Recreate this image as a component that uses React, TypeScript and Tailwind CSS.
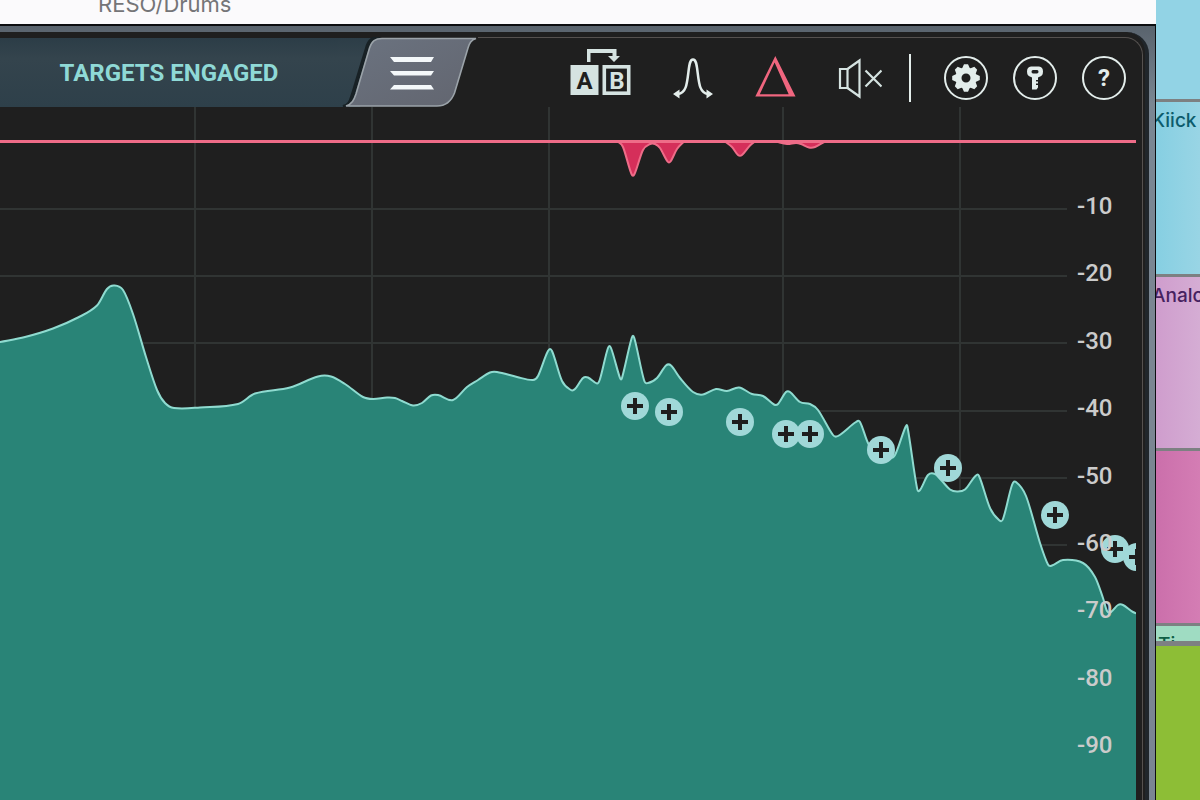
import React from "react";

type Point = [number, number];

const PLOT = { x: 0, y: 107, width: 1136, height: 693 };

const spectrum: Point[] = [
  [-10, 344], [0, 342], [25, 337], [53, 328.5], [78, 317.5], [97, 305.5], [107, 289], [114, 285.5], [123, 290],
  [133, 314], [146, 357], [157, 390], [165, 403], [174, 408], [200, 407.5], [238, 404], [255, 393.5], [290, 387.5], [318, 376.5],
  [331, 376.5], [345, 384], [363, 397], [373, 399], [387, 397.5], [395, 398], [402, 401], [413, 405.5], [422, 403],
  [431, 395.5], [438, 395], [453, 400], [467, 387], [478, 380], [490, 372.5], [497, 372], [517, 377], [533, 380],
  [538, 376], [548, 351], [552, 351], [562, 381], [571, 390], [575, 389], [583, 378], [588, 377.5], [597, 383.5],
  [600, 379], [608, 348], [611, 348], [620, 378], [622, 378], [631.7, 338], [634.3, 338], [644, 380], [648, 383],
  [657, 378], [666, 365.5], [671, 365.5], [680, 378], [693, 392], [703, 394.5], [716, 389], [727, 391], [739, 387.5],
  [752, 394], [763, 396], [774, 404.5], [778, 404], [786, 392], [790, 392], [800, 402], [810, 404], [818, 410],
  [833, 435], [838, 436], [856, 422], [860, 422], [868, 443], [877, 456], [889, 458], [895, 455], [905.5, 427],
  [907.5, 427], [917, 488], [920, 490], [928, 475], [935, 474], [942, 481], [950, 489.5], [957, 491.5], [965, 489.5],
  [975, 476.5], [979, 476], [990, 508], [999, 520], [1003, 519], [1012, 485], [1016, 482], [1026, 496],
  [1040, 543], [1048, 564.5], [1052, 565.5], [1063, 560], [1083, 563], [1095, 577], [1103, 598], [1107, 611],
  [1111, 612], [1118, 605], [1123, 605], [1133, 612], [1146, 616],
];

const reductions: Point[][] = [
  [
    [618, 141.5], [623, 147], [631.5, 174], [634.5, 174], [643, 150], [650, 144], [655, 144], [660, 148],
    [667.5, 161.5], [670.5, 161.5], [677, 149], [684, 141.5],
  ],
  [[725, 141.5], [732, 147], [738, 155], [742, 155], [750, 145.5], [755, 141.5]],
  [[776, 141.5], [787, 144], [796, 143], [801, 144], [809, 147.5], [815, 147], [825, 141.5]],
];

const targets: Point[] = [
  [635, 406], [669, 412], [740, 422], [786, 434], [810, 434],
  [881, 450], [948, 468], [1055, 515], [1137, 557], [1115, 549],
];

const levels = [-10, -20, -30, -40, -50, -60, -70, -80, -90];
const gridX = [195, 372, 549, 783, 960];
const gridY = [209, 276, 343, 411, 478, 545];

function slopeAt(points: Point[], i: number): number {
  const a = points[Math.max(i - 1, 0)];
  const c = points[Math.min(i + 1, points.length - 1)];
  return (c[1] - a[1]) / (c[0] - a[0]);
}

function smooth(points: Point[]): string {
  let d = `M${points[0][0]} ${points[0][1]}`;
  for (let i = 0; i < points.length - 1; i++) {
    const [x1, y1] = points[i];
    const [x2, y2] = points[i + 1];
    const third = (x2 - x1) / 3;
    d += `C${x1 + third} ${y1 + slopeAt(points, i) * third} ${x2 - third} ${y2 - slopeAt(points, i + 1) * third} ${x2} ${y2}`;
  }
  return d;
}

function MenuTab() {
  return (
    <button aria-label="Menu" className="block h-[70px] w-[140px]">
      <svg viewBox="338 37 140 70" className="block h-full w-full">
        <defs>
          <linearGradient id="engaged" x1="0" y1="0" x2="0" y2="1">
            <stop offset="0" stopColor="#2c3d47" />
            <stop offset="0.3" stopColor="#34444d" />
            <stop offset="1" stopColor="#2e404a" />
          </linearGradient>
          <linearGradient id="tab" x1="0" y1="0" x2="1" y2="1">
            <stop offset="0" stopColor="#6b7380" />
            <stop offset="1" stopColor="#62656f" />
          </linearGradient>
        </defs>
        <path d="M338 37H390L360 107H338Z" fill="url(#engaged)" />
        <path d="M338 37.500H390" stroke="#1f1f1f" />
        <path
          d="M343 107C350 106 351 100 353 94L367 48C369 41 372 38 380 37.500"
          fill="none"
          stroke="#182125"
          strokeWidth="4"
        />
        <path
          d="M346 106C352 104 354 100 356 94L369.500 48C372 41 375 38.500 382 38.500H476C471 40 469.500 43 468 48L454.500 93C451 102 446 106 437 106Z"
          fill="url(#tab)"
          stroke="#9ba3a9"
          strokeWidth="1.600"
        />
        <path
          d="M390 57H434L431 62H394ZM390 71H434L431 75.500H394ZM394 85H431L434 89.500H390Z"
          fill="#f4f8fa"
        />
      </svg>
    </button>
  );
}

function CompareIcon() {
  return (
    <svg viewBox="569 49 61 57" className="h-[57px] w-[61px]">
      <path d="M586 62V49H615.500V56H619L613 62L607 56H611.500V53H589.500V62Z" fill="#d5e3e1" />
      <rect x="569.500" y="65" width="28" height="30" fill="#d5e3e1" />
      <rect x="603.300" y="66.800" width="24.400" height="26.400" fill="none" stroke="#d5e3e1" strokeWidth="3.600" />
      <text x="583.500" y="89" textAnchor="middle" className="font-['Roboto'] text-[24px] font-bold" fill="#1f1f1f">A</text>
      <text x="616" y="89" textAnchor="middle" className="font-['Roboto'] text-[24px] font-bold" fill="#d5e3e1">B</text>
    </svg>
  );
}

function CurveIcon() {
  return (
    <svg viewBox="673 49 40 57" className="h-[57px] w-[40px]">
      <path
        d="M678 94C686 93 687 84 688.300 73C689.300 64 690 59.500 693 59.500S696.700 64 697.700 73C699 84 700 93 708 94"
        fill="none"
        stroke="#e3edeb"
        strokeWidth="2.500"
      />
      <path d="M673 94L679.500 89.500V98.500ZM713 94L706.500 89.500V98.500Z" fill="#e3edeb" />
    </svg>
  );
}

function DeltaIcon() {
  return (
    <svg viewBox="754 49 41 57" className="h-[57px] w-[41px]">
      <path
        d="M774.300 56L794.500 96.500H754.300ZM773.600 62.500L758.800 94.200H787.700Z"
        fillRule="evenodd"
        fill="#f0667f"
      />
    </svg>
  );
}

function MuteIcon() {
  return (
    <svg viewBox="838 49 44 57" className="h-[57px] w-[44px]">
      <g fill="none" stroke="#d5e3e1" strokeWidth="2.200">
        <path d="M840 69H847.500V88H840Z" />
        <path d="M847.500 69L859.500 60.500V96.500L847.500 88" />
        <path d="M865.500 70.500L881.500 86.500M881.500 70.500L865.500 86.500" />
      </g>
    </svg>
  );
}

function GearIcon() {
  const teeth = [0, 45, 90, 135, 180, 225, 270, 315];
  return (
    <svg viewBox="-15 -15 30 30" className="h-[30px] w-[30px]">
      <circle r="7.500" fill="none" stroke="#e3edeb" strokeWidth="6" />
      {teeth.map((a) => (
        <path key={a} d="M-4.200 -9L-2 -13.800H2L4.200 -9Z" fill="#e3edeb" transform={`rotate(${a})`} />
      ))}
    </svg>
  );
}

function KeyIcon() {
  return (
    <svg viewBox="0 0 18 26" className="h-[26px] w-[18px]">
      <path
        d="M5 1.500H13Q17 2 17 6.500T13 12L12 12.500V15H10V16.500H12V18.500H10V20H12V22.500L10.500 24.500H6V12.500L5 12Q1 11 1 6.500T5 1.500ZM7 5Q5.500 5 5.500 6.700T7 8.500H11Q12.500 8.500 12.500 6.700T11 5Z"
        fill="#e3edeb"
        fillRule="evenodd"
      />
    </svg>
  );
}

function RoundButton({ label, children }: { label: string; children: React.ReactNode }) {
  return (
    <button
      aria-label={label}
      className="flex h-11 w-11 items-center justify-center rounded-full border-2 border-[#e3edeb] text-[24px] leading-6 font-bold text-[#e3edeb]"
    >
      {children}
    </button>
  );
}

function Header() {
  return (
    <header className="flex h-[69px] shrink-0 items-start justify-between">
      <div className="-mt-px flex bg-[#1f1f1f]">
        <button className="h-[70px] w-[338px] border-t border-[#1f1f1f] bg-linear-to-b from-[#2c3d47] via-[#34444d] via-30% to-[#2e404a] text-[24px] font-bold text-[#8fd9d6]">
          TARGETS ENGAGED
        </button>
        <MenuTab />
      </div>
      <div className="flex h-full items-center pt-2.5 pr-4">
        <div className="flex gap-[42px]">
          <button aria-label="Compare A and B"><CompareIcon /></button>
          <button aria-label="Filter shape"><CurveIcon /></button>
          <button aria-label="Delta"><DeltaIcon /></button>
          <button aria-label="Mute"><MuteIcon /></button>
        </div>
        <div className="mr-[33px] ml-[27px] h-12 w-0.5 bg-[#e3edeb]" />
        <div className="flex gap-[25px]">
          <RoundButton label="Settings"><GearIcon /></RoundButton>
          <RoundButton label="License"><KeyIcon /></RoundButton>
          <RoundButton label="Help">?</RoundButton>
        </div>
      </div>
    </header>
  );
}

function Chart() {
  const line = smooth(spectrum);
  return (
    <section aria-label="Spectrum" className="relative mr-1.5 flex grow justify-end overflow-hidden">
      <svg
        viewBox={`${PLOT.x} ${PLOT.y} ${PLOT.width} ${PLOT.height}`}
        preserveAspectRatio="none"
        className="absolute inset-0 h-full w-full"
      >
        <g stroke="#303433" strokeWidth="2">
          {gridX.map((x) => <path key={x} d={`M${x} 107V800`} />)}
          {gridY.map((y) => <path key={y} d={`M0 ${y}H1067`} />)}
        </g>
        <path d={`${line}V810H-10Z`} fill="#298477" />
        <path d={line} fill="none" stroke="#8fdbd0" strokeWidth="2" />
        {reductions.map((points) => (
          <path key={points[0][0]} d={smooth(points)} fill="#d52f5a" stroke="#ee6c88" strokeWidth="2" />
        ))}
        <path d="M0 141.500H1136" stroke="#ee6c88" strokeWidth="3" />
      </svg>
      {targets.map(([x, y]) => (
        <button
          key={x}
          aria-label="Add target"
          className="absolute h-7 w-7 -translate-x-1/2 -translate-y-1/2 rounded-full bg-[#a0d8d8]"
          style={{
            left: `${(x / PLOT.width) * 100}%`,
            top: `${((y - PLOT.y) / PLOT.height) * 100}%`,
          }}
        >
          <svg viewBox="0 0 28 28" className="block h-7 w-7">
            <path d="M6 14H22M14 6V22" stroke="#1f1f1f" strokeWidth="4" />
          </svg>
        </button>
      ))}
      <ol className="pointer-events-none relative flex w-[59px] flex-col justify-between pt-[89px] pb-[45px] text-[24px] leading-5 font-medium text-[#cbcbcb]">
        {levels.map((level) => <li key={level}>{level}</li>)}
      </ol>
    </section>
  );
}

function Tracks() {
  return (
    <aside className="flex w-11 shrink-0 flex-col gap-[3px] overflow-hidden bg-[#7d8082] font-['Inter'] text-[19px] leading-6 font-medium">
      <div className="h-[99px] shrink-0 bg-[#92d3e5]" />
      <div className="h-[172px] shrink-0 bg-linear-to-r from-[#86cfe2] to-[#99d5e5] pt-[7px] text-[#0d5c6c]">
        <span className="-ml-1">Kiick</span>
      </div>
      <div className="h-[171px] shrink-0 bg-linear-to-r from-[#cf9dcd] to-[#d5add4] pt-[7px] text-[#46215f]">
        <span className="-ml-1">Analog</span>
      </div>
      <div className="h-[172px] shrink-0 bg-linear-to-r from-[#cb6fab] to-[#d47db4]" />
      <div className="h-[15px] shrink-0 overflow-hidden bg-[#9fdcc2] pt-[7px] text-[#0f5f45]">
        <span className="ml-0.5">Ti</span>
      </div>
      <div className="mt-0.5 grow bg-[#8dbe36]" />
    </aside>
  );
}

export default function App() {
  return (
    <div className="flex min-h-screen overflow-hidden bg-[#1f1f1f] font-['Roboto',sans-serif]">
      <main className="flex min-w-0 grow flex-col">
        <div className="flex h-6 shrink-0 items-end overflow-hidden bg-[#fbfafc] pb-1.5 pl-[98px] font-['Inter'] text-[22px] leading-7 text-[#757578]">
          RESO/Drums
        </div>
        <div className="flex grow flex-col border-t-2 border-r border-[#0c0d10] bg-linear-to-b from-[#59636d] to-[#7a8692] to-10% pt-1.5 pr-1.5">
          <div className="flex grow flex-col rounded-tr-[22px] border-r-4 border-[#20262b] bg-[#1f1f1f] pt-[5px] pr-0.5">
            <div className="flex grow flex-col rounded-tr-[18px] border-t border-r border-[#55514f]">
              <Header />
              <Chart />
            </div>
          </div>
        </div>
      </main>
      <Tracks />
    </div>
  );
}
